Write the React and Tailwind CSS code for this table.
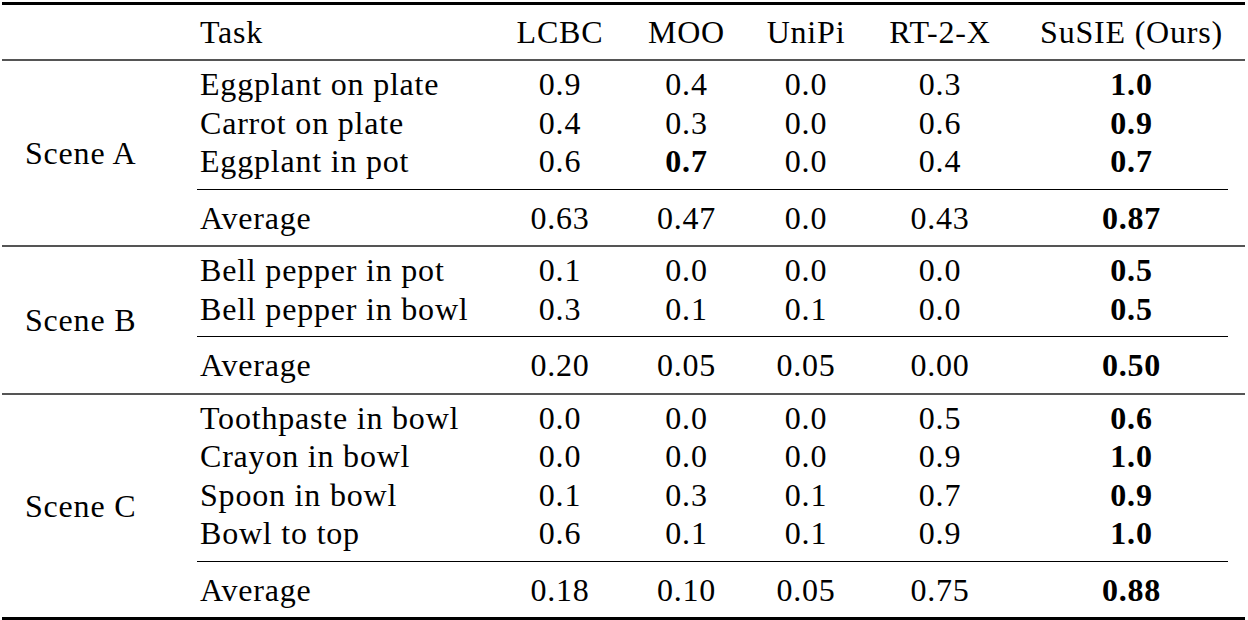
import React from 'react';

const cols = 'grid grid-cols-[312px_126px_127px_112px_156px_227px]';

const scenes = [
  {
    name: 'Scene A',
    rows: [
      ['Eggplant on plate', '0.9', '0.4', '0.0', '0.3', '1.0', -1],
      ['Carrot on plate', '0.4', '0.3', '0.0', '0.6', '0.9', -1],
      ['Eggplant in pot', '0.6', '0.7', '0.0', '0.4', '0.7', 2],
    ],
    avg: ['Average', '0.63', '0.47', '0.0', '0.43', '0.87', -1],
  },
  {
    name: 'Scene B',
    rows: [
      ['Bell pepper in pot', '0.1', '0.0', '0.0', '0.0', '0.5', -1],
      ['Bell pepper in bowl', '0.3', '0.1', '0.1', '0.0', '0.5', -1],
    ],
    avg: ['Average', '0.20', '0.05', '0.05', '0.00', '0.50', -1],
  },
  {
    name: 'Scene C',
    rows: [
      ['Toothpaste in bowl', '0.0', '0.0', '0.0', '0.5', '0.6', -1],
      ['Crayon in bowl', '0.0', '0.0', '0.0', '0.9', '1.0', -1],
      ['Spoon in bowl', '0.1', '0.3', '0.1', '0.7', '0.9', -1],
      ['Bowl to top', '0.6', '0.1', '0.1', '0.9', '1.0', -1],
    ],
    avg: ['Average', '0.18', '0.10', '0.05', '0.75', '0.88', -1],
  },
];

const Row = ({ cells }) => {
  const extraBold = cells[6];
  return (
    <div className={`${cols} h-[38.5px] items-center`}>
      <div className="pl-[15px]">{cells[0]}</div>
      {cells.slice(1, 6).map((v, i) => (
        <div
          key={i}
          className={`text-center ${i === 4 || i + 1 === extraBold ? 'font-bold' : ''}`}
        >
          {v}
        </div>
      ))}
    </div>
  );
};

export default function App() {
  return (
    <div className="w-[1248px] h-[620px] bg-white text-black overflow-hidden font-[family-name:'Liberation_Serif','Times_New_Roman',serif] text-[32px] tracking-[0.8px] leading-none">
      <div className="ml-[2px] w-[1243px] pt-[2px]">
        {/* top rule */}
        <div className="h-[3px] bg-black" />

        {/* header */}
        <div className="flex h-[54px] items-center">
          <div className="w-[183px]" />
          <div className={cols}>
            <div className="pl-[15px]">Task</div>
            <div className="text-center">LCBC</div>
            <div className="text-center">MOO</div>
            <div className="text-center">UniPi</div>
            <div className="text-center">RT-2-X</div>
            <div className="text-center">SuSIE (Ours)</div>
          </div>
        </div>

        {scenes.map((s) => (
          <div key={s.name}>
            <div className="h-[2px] bg-[#555]" />
            <div className="flex">
              <div className="w-[183px] pl-[23px] flex items-center">{s.name}</div>
              <div className="flex-1 pt-[4px] pb-[8px]">
                {s.rows.map((r) => (
                  <Row key={r[0]} cells={r} />
                ))}
                <div className="ml-[12px] mr-[17px] h-px bg-black mt-[8px] mb-[9px]" />
                <Row cells={s.avg} />
              </div>
            </div>
          </div>
        ))}

        {/* bottom rule */}
        <div className="h-[3px] bg-black" />
      </div>
    </div>
  );
}
